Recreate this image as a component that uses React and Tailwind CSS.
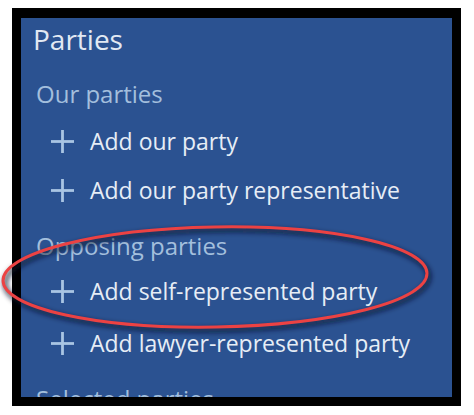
import React from "react";

const font = { fontFamily: '"Open Sans", "Noto Sans", sans-serif' };

function Plus() {
  return (
    <svg width="25" height="25" viewBox="0 0 25 25" className="shrink-0">
      <line x1="12.5" y1="1" x2="12.5" y2="24" stroke="#a9c5e3" strokeWidth="2.8" />
      <line x1="1" y1="12.5" x2="24" y2="12.5" stroke="#a9c5e3" strokeWidth="2.8" />
    </svg>
  );
}

function Item({ label, className }) {
  return (
    <div className={`flex h-[40px] items-center gap-[15px] pl-[29px] ${className}`}>
      <Plus />
      <span className="text-[23px] leading-none text-[#e6edf6] whitespace-nowrap">{label}</span>
    </div>
  );
}

function Heading({ label, className }) {
  return (
    <div className={`flex h-[40px] items-center pl-[15px] text-[24px] leading-none text-[#a3bfdd] whitespace-nowrap ${className}`}>
      {label}
    </div>
  );
}

export default function App() {
  return (
    <div className="relative h-[415px] w-[474px] overflow-hidden bg-white" style={font}>
      <div className="ml-[12px] mt-[8px] h-[398px] w-[449px] overflow-hidden border-x-[9px] border-t-[10px] border-b-[9px] border-black bg-[#2b5291]">
        <div className="flex flex-col pt-[1px]">
          <div className="flex h-[40px] items-center pl-[12px] text-[28px] leading-none text-[#e2e9f3]">Parties</div>
          <Heading label="Our parties" className="mt-[15px]" />
          <Item label="Add our party" className="mt-[7px]" />
          <Item label="Add our party representative" className="mt-[9px]" />
          <Heading label="Opposing parties" className="mt-[16px]" />
          <Item label="Add self-represented party" className="mt-[5px]" />
          <Item label="Add lawyer-represented party" className="mt-[12px]" />
          <Heading label="Selected parties" className="mt-[16px]" />
        </div>
      </div>

      <svg className="pointer-events-none absolute left-0 top-0" width="474" height="415">
        <defs>
          <filter id="sh" x="-10%" y="-30%" width="120%" height="160%">
            <feGaussianBlur stdDeviation="2.5" />
          </filter>
        </defs>
        <ellipse cx="217" cy="280" rx="212" ry="50" transform="rotate(-1 217 280)" fill="none" stroke="#0a152b" strokeOpacity="0.7" strokeWidth="5" filter="url(#sh)" />
        <ellipse cx="215" cy="277" rx="212" ry="50" transform="rotate(-1 215 277)" fill="none" stroke="#ec4243" strokeWidth="3" />
      </svg>
    </div>
  );
}
